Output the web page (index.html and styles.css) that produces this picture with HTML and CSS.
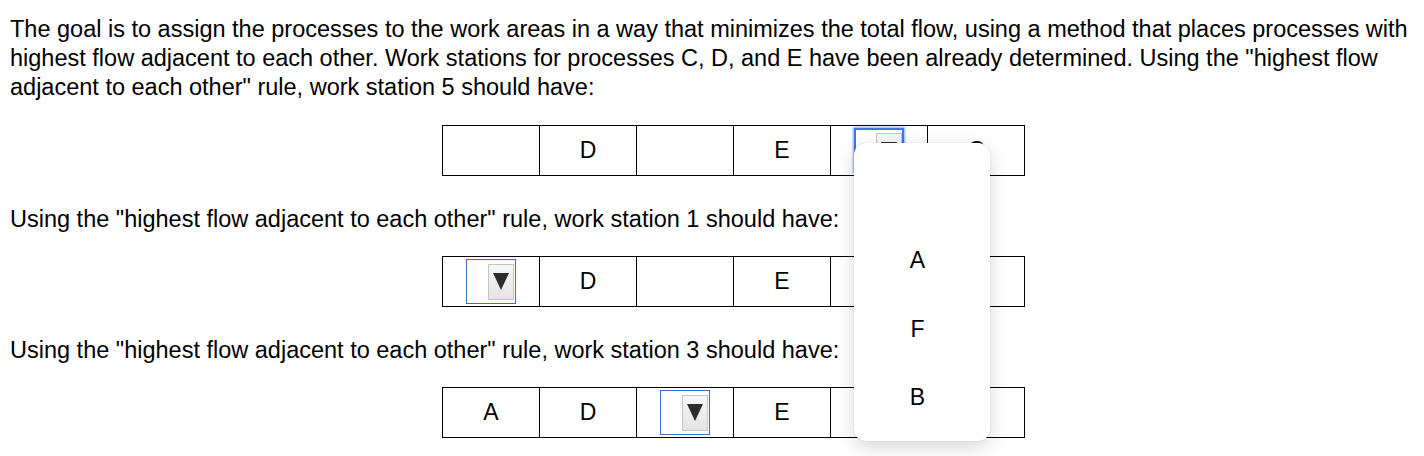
FILE: index.html
```html
<!DOCTYPE html>
<html lang="en">
<head>
  <meta charset="UTF-8" />
  <title>Work station layout</title>
  <link rel="stylesheet" href="styles.css">
</head>
<body>
  <div class="page">
    <p class="question">The goal is to assign the processes to the work areas in a way that minimizes the total flow, using a method that places processes with highest flow adjacent to each other. Work stations for processes C, D, and E have been already determined. Using the "highest flow adjacent to each other" rule, work station 5 should have:</p>

    <table class="stations first">
      <tr>
        <td></td>
        <td>D</td>
        <td></td>
        <td>E</td>
        <td><span class="pick focused"><span class="pick-btn"><span class="arrow"></span></span></span></td>
        <td>C</td>
      </tr>
    </table>

    <p class="question">Using the "highest flow adjacent to each other" rule, work station 1 should have:</p>

    <table class="stations">
      <tr>
        <td><span class="pick"><span class="pick-btn"><span class="arrow"></span></span></span></td>
        <td>D</td>
        <td></td>
        <td>E</td>
        <td></td>
        <td>C</td>
      </tr>
    </table>

    <p class="question">Using the "highest flow adjacent to each other" rule, work station 3 should have:</p>

    <table class="stations">
      <tr>
        <td>A</td>
        <td>D</td>
        <td><span class="pick"><span class="pick-btn"><span class="arrow"></span></span></span></td>
        <td>E</td>
        <td></td>
        <td>C</td>
      </tr>
    </table>

    <!-- open list of the focused select -->
    <div class="dropdown">
      <div class="option">A</div>
      <div class="option">F</div>
      <div class="option">B</div>
    </div>
  </div>
</body>
</html>
```

FILE: styles.css
```css
html, body {
  margin: 0;
  padding: 0;
  background-color: #ffffff;
  color: #000000;
  font-family: "Liberation Sans", Arial, sans-serif;
}

.page {
  position: relative;
  padding: 15px 10px 0 10px;
  height: 441px;
  overflow: hidden;
}

.question {
  margin: 0;
  font-size: 23.5px;
  line-height: 29px;
}

.stations {
  border-collapse: collapse;
  table-layout: fixed;
  width: 583px;
  margin: 22px 0 29px 432px;
}
.stations.first { margin-top: 23px; }

.stations td {
  border: 1px solid #000000;
  height: 49px;
  padding: 0;
  text-align: center;
  vertical-align: middle;
  font-size: 23px;
}

.pick {
  display: inline-flex;
  justify-content: flex-end;
  align-items: center;
  box-sizing: border-box;
  width: 50px;
  height: 45px;
  border: 1px solid #3d6fc9;
  padding-right: 1px;
  vertical-align: middle;
}

.pick.focused {
  border: 2px solid #3a78e6;
  box-shadow: 0 0 2px 1px rgba(58, 120, 230, 0.6);
  padding-right: 0;
}

.pick-btn {
  display: flex;
  align-items: center;
  justify-content: center;
  box-sizing: border-box;
  width: 26px;
  height: 36px;
  border: 1px solid #c4c4c4;
  background: linear-gradient(#f7f7f7, #e4e4e4);
}

.arrow {
  width: 0;
  height: 0;
  border-left: 8px solid transparent;
  border-right: 8px solid transparent;
  border-top: 17px solid #2d2d2d;
}

.dropdown {
  position: absolute;
  left: 854px;
  top: 143px;
  width: 136px;
  height: 298px;
  background-color: #ffffff;
  border-radius: 12px;
  box-shadow: 0 0 1px rgba(0, 0, 0, 0.25), 0 6px 18px rgba(0, 0, 0, 0.16);
  padding: 105px 9px 0 0;
  box-sizing: border-box;
}

.option {
  height: 68.5px;
  text-align: center;
  font-size: 23px;
  line-height: 24px;
}
```
